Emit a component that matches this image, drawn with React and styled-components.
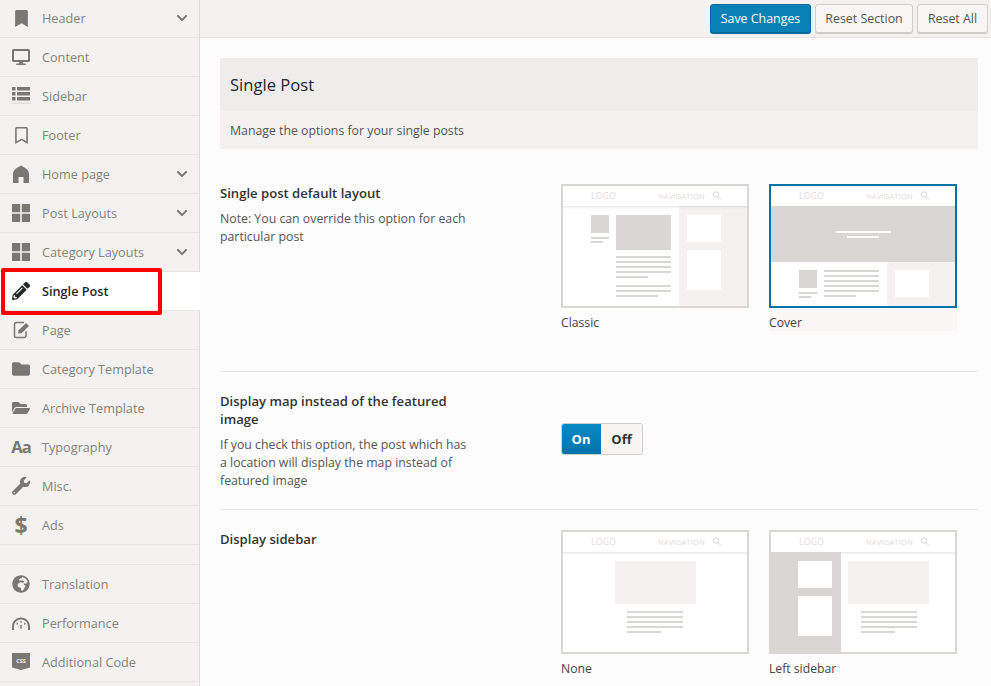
import React from "react"
import styled, { createGlobalStyle } from "styled-components"
import {
  FaBookmark,
  FaDesktop,
  FaRegBookmark,
  FaPencilAlt,
  FaFolder,
  FaFolderOpen,
  FaWrench,
  FaGlobeAfrica,
  FaChevronDown,
} from "react-icons/fa"

const GREY = "#d8d7d3"
const PALE = "#f3f2f1"

const GlobalStyle = createGlobalStyle`
  html, body {
    margin: 0;
    height: 100%;
    overflow: hidden;
    background: #fcfcfc;
    font-family: "Open Sans", "Liberation Sans", sans-serif;
  }
  * { box-sizing: border-box; }
`

const Page = styled.div`
  display: flex;
  height: 686px;
  overflow: hidden;
`

const Sidebar = styled.nav`
  position: relative;
  flex: 0 0 200px;
  margin-top: -1px;
  background: ${PALE};
  border-right: 1px solid #dddcd9;
`

const Row = styled.div`
  display: flex;
  align-items: center;
  height: 39px;
  margin-right: ${p => (p.$active ? "-1px" : "0")};
  border-bottom: 1px solid #e6e5e2;
  background: ${p => (p.$active ? "#fff" : "transparent")};
  color: ${p => (p.$active ? "#23282d" : "#85837e")};
  font-size: 12.7px;
  font-weight: ${p => (p.$active ? 600 : 500)};
`

const IconSlot = styled.span`
  display: flex;
  align-items: center;
  justify-content: center;
  flex: 0 0 18px;
  min-width: 0;
  height: 18px;
  margin: 0 12px;
  color: ${p => (p.$active ? "#23282d" : "#7a7873")};
  font-size: 18px;
`

const AaGlyph = styled.span`
  font-size: 16.5px;
  font-weight: 700;
  letter-spacing: -0.8px;
  line-height: 18px;
`

const DollarGlyph = styled.span`
  font-size: 23px;
  font-weight: 700;
  line-height: 18px;
`

const RowLabel = styled.span`
  flex: 1;
`

const Chevron = styled(FaChevronDown)`
  margin-right: 11px;
  color: #7a7873;
  font-size: 12px;
`

const Spacer = styled.div`
  height: 20px;
  border-bottom: 1px solid #e6e5e2;
`

const Highlight = styled.div`
  position: absolute;
  top: 269px;
  left: 1px;
  width: 161px;
  height: 47px;
  border: 4px solid #f00;
  border-radius: 2px;
  pointer-events: none;
`

const Main = styled.main`
  flex: 1;
  min-width: 0;
`

const TopBar = styled.header`
  display: flex;
  justify-content: flex-end;
  gap: 4px;
  height: 38px;
  padding: 4px 3px 0 0;
  background: ${PALE};
  border-bottom: 1px solid #e4e3e0;
`

const Button = styled.button`
  width: ${p => p.$width}px;
  height: 29px;
  padding: 0;
  border: 1px solid ${p => (p.$primary ? "#006a98" : "#cfcecb")};
  border-radius: 3px;
  background: ${p => (p.$primary ? "#0a81b5" : "#f7f6f4")};
  box-shadow: 0 1px 0 ${p => (p.$primary ? "#006a98" : "#cfcecb")};
  color: ${p => (p.$primary ? "#fff" : "#555")};
  font-family: inherit;
  font-size: 12.4px;
`

const Content = styled.div`
  padding: 20px 13px 0 20px;
`

const SectionTitle = styled.h2`
  display: flex;
  align-items: center;
  height: 53px;
  margin: 0;
  padding: 0 10px;
  background: #eeedeb;
  color: #23282d;
  font-size: 16.6px;
  font-weight: 500;
`

const SectionNote = styled.p`
  display: flex;
  align-items: center;
  height: 38px;
  margin: 0 0 15px;
  padding: 0 10px;
  background: ${PALE};
  color: #555;
  font-size: 12.3px;
`

const Option = styled.section`
  display: grid;
  grid-template-columns: 341px 1fr;
  padding: 20px 0 19px;
  border-bottom: ${p => (p.$flush ? "none" : "1px solid #e8e7e5")};
`

const OptionText = styled.div`
  width: 250px;
`

const OptionTitle = styled.h3`
  margin: 0 0 8px;
  color: #333;
  font-size: 13.1px;
  font-weight: 600;
  line-height: 18px;
`

const OptionNote = styled.p`
  margin: 0;
  color: #555;
  font-size: 12.3px;
  line-height: 18px;
`

const Choices = styled.div`
  display: flex;
  gap: 20px;
  padding-bottom: 21px;
`

const Choice = styled.div`
  width: 188px;
`

const ChoiceLabel = styled.div`
  height: 23px;
  padding-top: 6px;
  background: ${p => (p.$selected ? "#f8f7f5" : "transparent")};
  color: #444;
  font-size: 12.2px;
  line-height: 18px;
`

const ThumbSvg = styled.svg`
  display: block;
  width: 188px;
  height: 124px;
  font-family: "Open Sans", "Liberation Sans", sans-serif;
`

const Toggle = styled.div`
  display: flex;
  width: 82px;
  height: 32px;
  margin-top: 31px;
  border: 1px solid #d0cfcc;
  border-radius: 3px;
  overflow: hidden;
  font-size: 13px;
  font-weight: 700;
  line-height: 30px;
  text-align: center;
`

const ToggleOn = styled.span`
  width: 40px;
  margin: -1px 0 -1px -1px;
  line-height: 32px;
  background: linear-gradient(#0a8ac2, #0073aa);
  color: #fff;
`

const ToggleOff = styled.span`
  flex: 1;
  background: #f7f5f2;
  color: #333;
`

const ListIcon = () => (
  <svg width="18" height="18" viewBox="0 0 18 18" fill="currentColor">
    <path d="M0 0h3.500v3.500H0zM5 0h13v3.500H5zM0 5h3.500v3.500H0zM5 5h13v3.500H5zM0 10h3.500v3.500H0zM5 10h13v3.500H5z" />
    <path d="M0 15.500h18v1.500H0z" opacity="0.15" />
  </svg>
)

const HomeIcon = () => (
  <svg width="18" height="18" viewBox="0 0 18 18" fill="currentColor">
    <path d="M9 0.500L14 3.500Q17 6 17 8.500V18H11.500V12H6.500V18H1V8.500Q1 6 4 3.500Z" />
  </svg>
)

const GridIcon = () => (
  <svg width="18" height="18" viewBox="0 0 18 18" fill="currentColor">
    <path d="M0 0h8.200v8.200H0zM9.800 0H18v8.200H9.800zM0 9.800h8.200V18H0zM9.800 9.800H18V18H9.800z" />
  </svg>
)

const PageIcon = () => (
  <svg width="18" height="18" viewBox="0 0 18 18">
    <path d="M12 1.500H4.500Q2.500 1.500 2.500 3.500V14.500Q2.500 16.500 4.500 16.500H12Q14 16.500 14 14.500V10.500" fill="none" stroke="currentColor" strokeWidth="1.500" />
    <path d="M6 12.500L6.700 9.200L14 2L17 5L9.500 12.200Z" fill="currentColor" />
  </svg>
)

const PerformanceIcon = () => (
  <svg width="18" height="18" viewBox="0 0 18 18" fill="currentColor">
    <path d="M0 16V12.500C0 7.500 4 3.500 9 3.500s9 4 9 9V16h-2v-3.500C16 8.500 13 5.500 9 5.500S2 8.500 2 12.500V16z" />
    <rect x="8.300" y="7" width="1.400" height="1.800" />
    <rect x="8.300" y="11" width="1.400" height="3.500" />
    <rect x="4.600" y="8.800" width="1.400" height="1.800" />
    <rect x="12" y="8.800" width="1.400" height="1.800" />
  </svg>
)

const CssIcon = () => (
  <svg width="18" height="18" viewBox="0 0 18 18">
    <path d="M0 0h18v14.500L9 17 0 14.500z" fill="currentColor" />
    <text x="9" y="9.500" textAnchor="middle" fontSize="5.500" fontWeight="700" fill="#f3f2f1">CSS</text>
  </svg>
)

const menu = [
  { label: "Header", icon: <FaBookmark size={17} />, more: true },
  { label: "Content", icon: <FaDesktop /> },
  { label: "Sidebar", icon: <ListIcon /> },
  { label: "Footer", icon: <FaRegBookmark size={17} /> },
  { label: "Home page", icon: <HomeIcon />, more: true },
  { label: "Post Layouts", icon: <GridIcon />, more: true },
  { label: "Category Layouts", icon: <GridIcon />, more: true },
  { label: "Single Post", icon: <FaPencilAlt />, active: true },
  { label: "Page", icon: <PageIcon /> },
  { label: "Category Template", icon: <FaFolder /> },
  { label: "Archive Template", icon: <FaFolderOpen /> },
  { label: "Typography", icon: <AaGlyph>Aa</AaGlyph> },
  { label: "Misc.", icon: <FaWrench /> },
  { label: "Ads", icon: <DollarGlyph>$</DollarGlyph> },
  { spacer: true },
  { label: "Translation", icon: <FaGlobeAfrica /> },
  { label: "Performance", icon: <PerformanceIcon /> },
  { label: "Additional Code", icon: <CssIcon /> },
]

const bars = (list, fill) =>
  list.map(([x, y, w, h = 2]) => <rect key={`${x}-${y}`} x={x} y={y} width={w} height={h} fill={fill} />)

// the little header every layout preview shares
const ThumbHeader = ({ shadow }) => (
  <>
    {shadow && (
      <>
        <rect x="2" y="22" width="184" height="1" fill="#000" opacity="0.08" />
        <rect x="2" y="23" width="184" height="1" fill="#000" opacity="0.04" />
        <rect x="2" y="24" width="184" height="1" fill="#000" opacity="0.015" />
      </>
    )}
    <rect x="2" y="2" width="184" height="20" fill="#fff" />
    <text x="30" y="15" fontSize="8.500" letterSpacing="0.3" fill="#dedcd8">LOGO</text>
    <text x="97" y="15" fontSize="7.500" letterSpacing="0.2" fill="#dedcd8">NAVIGATION</text>
    <circle cx="155" cy="10.500" r="2.700" fill="none" stroke="#d6d5d1" />
    <line x1="157" y1="12.500" x2="160" y2="15.500" stroke="#d6d5d1" />
  </>
)

const Thumb = ({ kind, selected }) => (
  <ThumbSvg viewBox="0 0 188 124">
    <rect width="188" height="124" fill={selected ? "#0073aa" : GREY} />
    <rect x="2" y="2" width="184" height="120" fill="#fff" />
    {kind === "classic" && (
      <>
        <rect x="118" y="22" width="68" height="100" fill={PALE} />
        {bars([[30, 31, 18, 18], [30, 53, 18], [30, 57, 12], [55, 31, 55, 35], [55, 72, 55], [55, 77, 55], [55, 82, 55], [55, 87, 55], [55, 92, 32], [55, 101, 55], [55, 106, 55], [55, 111, 42]], GREY)}
        {bars([[126, 31, 34, 27], [126, 66, 34, 40]], "#fff")}
        <ThumbHeader shadow />
      </>
    )}
    {kind === "cover" && (
      <>
        <rect x="2" y="22" width="184" height="56" fill={GREY} />
        <rect x="118" y="78" width="68" height="44" fill={PALE} />
        {bars([[67, 47, 55], [78, 52, 32], [126, 86, 34, 27]], "#fff")}
        {bars([[30, 86, 18, 18], [30, 108, 18], [30, 112, 12], [55, 86, 55], [55, 91, 55], [55, 96, 55], [55, 101, 55], [55, 106, 55], [55, 111, 32]], GREY)}
        <ThumbHeader />
      </>
    )}
    {kind === "none" && (
      <>
        <rect x="54" y="31" width="81" height="43" fill={PALE} />
        {bars([[66, 81, 56], [66, 86, 56], [66, 91, 56], [66, 96, 56], [66, 101, 34]], GREY)}
        <ThumbHeader shadow />
      </>
    )}
    {kind === "left" && (
      <>
        <rect x="79" y="31" width="81" height="43" fill={PALE} />
        {bars([[92, 81, 56], [92, 86, 56], [92, 91, 56], [92, 96, 56], [92, 101, 34]], GREY)}
        <ThumbHeader shadow />
        <rect x="2" y="22" width="70" height="100" fill={GREY} />
        {bars([[29, 31, 34, 27], [29, 66, 34, 40]], "#fff")}
      </>
    )}
  </ThumbSvg>
)

export default function App() {
  return (
    <Page>
      <GlobalStyle />
      <Sidebar>
        {menu.map(item =>
          item.spacer ? (
            <Spacer key="spacer" />
          ) : (
            <Row key={item.label} $active={item.active}>
              <IconSlot $active={item.active}>{item.icon}</IconSlot>
              <RowLabel>{item.label}</RowLabel>
              {item.more && <Chevron />}
            </Row>
          )
        )}
        <Highlight />
      </Sidebar>
      <Main>
        <TopBar>
          <Button $primary $width={101}>Save Changes</Button>
          <Button $width={98}>Reset Section</Button>
          <Button $width={71}>Reset All</Button>
        </TopBar>
        <Content>
          <SectionTitle>Single Post</SectionTitle>
          <SectionNote>Manage the options for your single posts</SectionNote>
          <Option>
            <OptionText>
              <OptionTitle>Single post default layout</OptionTitle>
              <OptionNote>Note: You can override this option for each particular post</OptionNote>
            </OptionText>
            <Choices>
              <Choice>
                <Thumb kind="classic" />
                <ChoiceLabel>Classic</ChoiceLabel>
              </Choice>
              <Choice>
                <Thumb kind="cover" selected />
                <ChoiceLabel $selected>Cover</ChoiceLabel>
              </Choice>
            </Choices>
          </Option>
          <Option>
            <OptionText>
              <OptionTitle>Display map instead of the featured image</OptionTitle>
              <OptionNote>If you check this option, the post which has a location will display the map instead of featured image</OptionNote>
            </OptionText>
            <div>
              <Toggle>
                <ToggleOn>On</ToggleOn>
                <ToggleOff>Off</ToggleOff>
              </Toggle>
            </div>
          </Option>
          <Option $flush>
            <OptionText>
              <OptionTitle>Display sidebar</OptionTitle>
            </OptionText>
            <Choices>
              <Choice>
                <Thumb kind="none" />
                <ChoiceLabel>None</ChoiceLabel>
              </Choice>
              <Choice>
                <Thumb kind="left" />
                <ChoiceLabel>Left sidebar</ChoiceLabel>
              </Choice>
            </Choices>
          </Option>
        </Content>
      </Main>
    </Page>
  )
}
